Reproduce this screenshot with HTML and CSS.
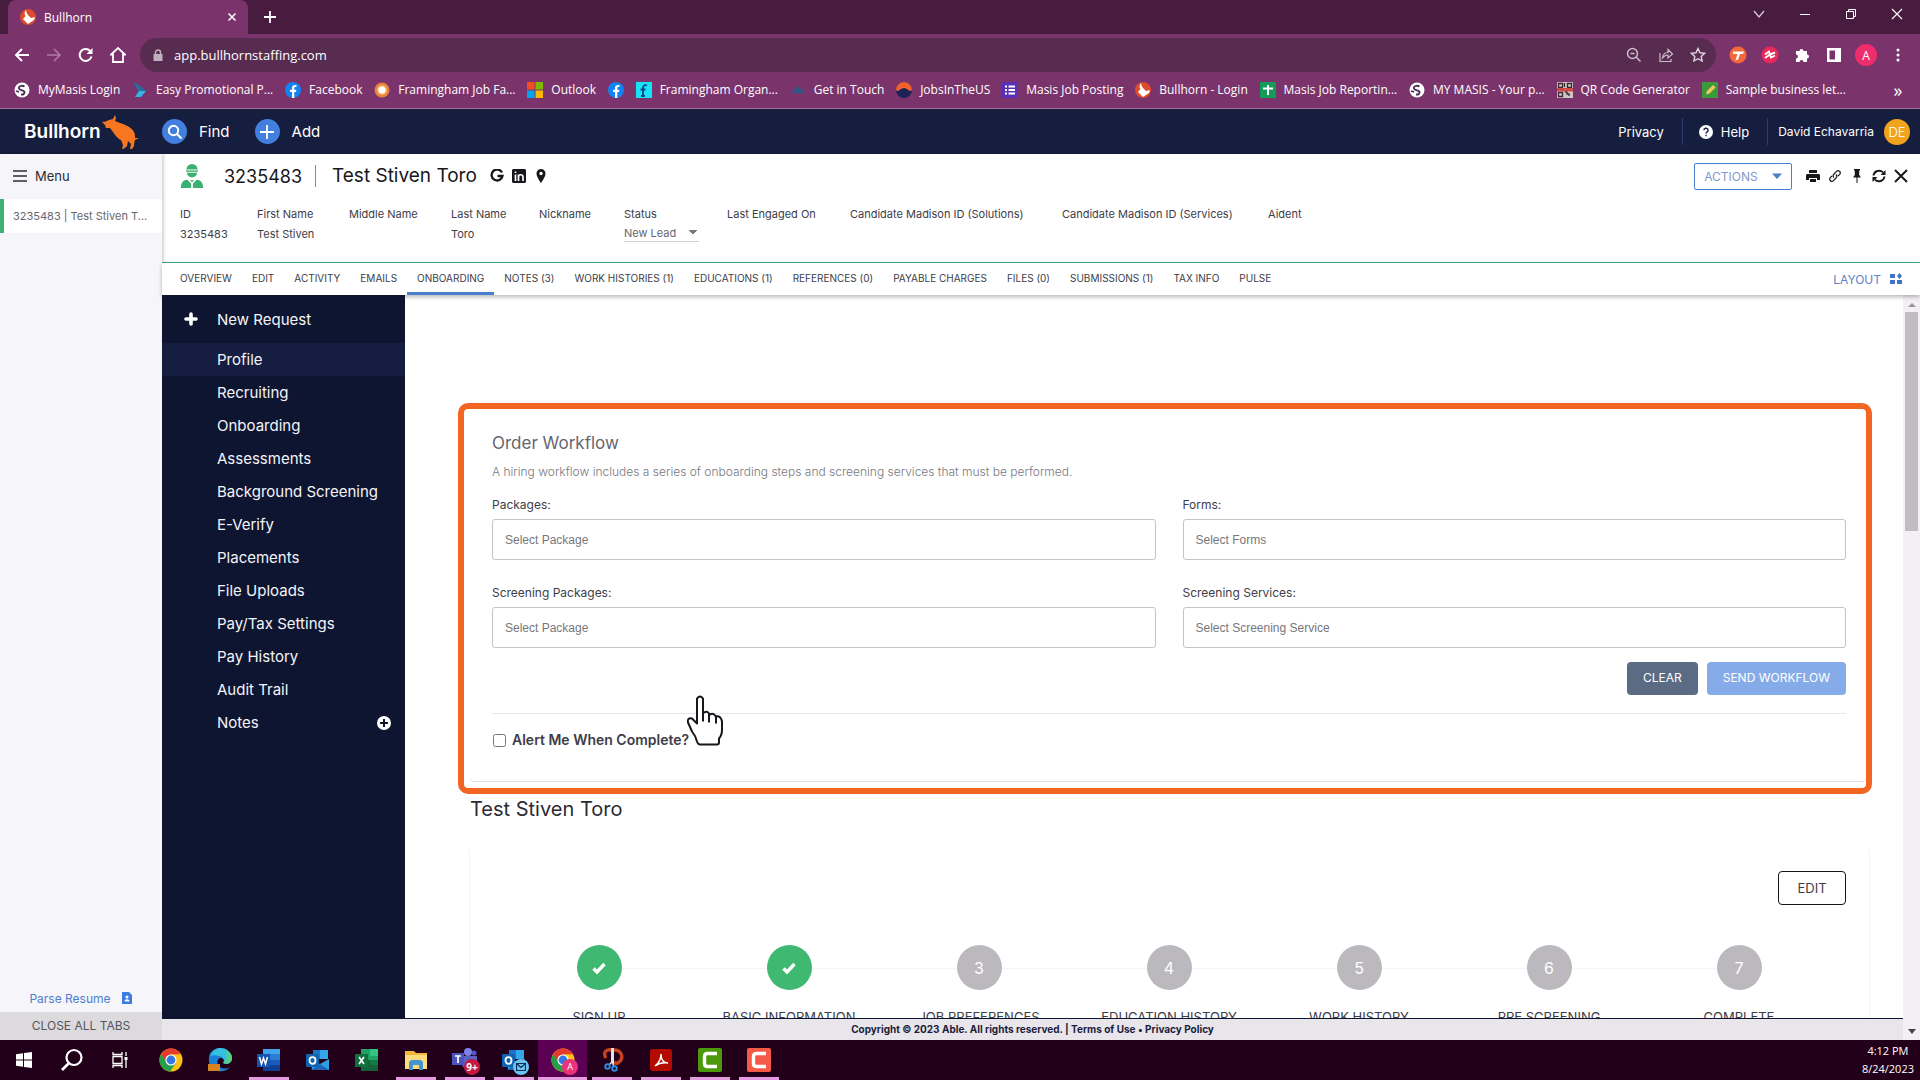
FILE: index.html
```html
<!DOCTYPE html>
<html lang="en">
<head>
<meta charset="utf-8">
<title>Bullhorn</title>
<link rel="stylesheet" href="styles.css">
</head>
<body>
<svg class="sprite" aria-hidden="true">
  <symbol id="bull-mark" viewBox="0 0 16 16"><circle cx="8" cy="8" r="8" fill="#dd4a2c"/><path d="M6 1c-1.500 2-2 4-.5 6L3 10l5 5 6-4 1-3-4 1-3-3c-1-1-1.500-3-2-5z" fill="#fff"/></symbol>
  <symbol id="globe" viewBox="0 0 16 16"><circle cx="8" cy="8" r="7.500" fill="#fff"/><path d="M10.500 4.500C8 3 4.500 4 5 6.500S11 8 10.500 10.500 7 12.500 7 12.500M2 9l3 1" fill="none" stroke="#4b2a55" stroke-width="1.800"/></symbol>
  <symbol id="fb" viewBox="0 0 16 16"><circle cx="8" cy="8" r="8" fill="#1183f5"/><path d="M7 16V10H5V7.700h2V6c0-2 1.200-3 3-3l1.500.1v2h-1c-.8 0-1.200.4-1.200 1.100v1.500h2.100L11 10H9.300v6z" fill="#fff"/></symbol>
  <symbol id="chrome" viewBox="0 0 24 24"><circle cx="12" cy="12" r="11.500" fill="#fbc116"/><path d="M2 6.300A11.500 11.500 0 0 1 22 6.300H12L7 15z" fill="#e33b2e"/><path d="M2 6.300A11.500 11.500 0 0 0 11 23.500l6-8.800H8z" fill="#269f4b"/><circle cx="12" cy="12" r="5.600" fill="#fff"/><circle cx="12" cy="12" r="4.400" fill="#3478e8"/></symbol>
  <symbol id="outlook" viewBox="0 0 24 24"><path d="M7 2h15v9H7z" fill="#1a76c8"/><path d="M14 2h8v9h-8z" fill="#34a7ec"/><path d="M5 12l9 4 9-5v11H6z" fill="#2f9de4"/><path d="M5 22l9-6 9 6z" fill="#1b66b4"/><rect x="0" y="6" width="13" height="13" rx="1" fill="#0f63b0"/><ellipse cx="6.500" cy="12.500" rx="3" ry="3.300" fill="none" stroke="#fff" stroke-width="1.800"/></symbol>
</svg>

<header class="browser">
  <div class="tabstrip">
    <div class="tab">
      <svg class="i16"><use href="#bull-mark"/></svg><span class="tab-title">Bullhorn</span>
      <button class="plain" aria-label="Close tab"><svg class="i10" viewBox="0 0 10 10"><path d="M1.500 1.500l7 7m0-7l-7 7" stroke="#fff" stroke-width="1.500"/></svg></button>
    </div>
    <button class="plain newtab" aria-label="New tab"><svg class="i14" viewBox="0 0 14 14"><path d="M7 1v12M1 7h12" stroke="#fff" stroke-width="1.800"/></svg></button>
    <div class="winctl">
      <button class="plain" aria-label="Search tabs"><svg class="i14" viewBox="0 0 14 14"><path d="M2 4l5 6 5-6" fill="none" stroke="#d9c9d5" stroke-width="1.300"/></svg></button>
      <button class="plain" aria-label="Minimize"><svg class="i14" viewBox="0 0 14 14"><path d="M2 7.500h10" stroke="#fff"/></svg></button>
      <button class="plain" aria-label="Restore"><svg class="i14" viewBox="0 0 14 14"><path d="M2.500 4.500h7v7h-7zM4.500 4.500v-2h7v7h-2" fill="none" stroke="#fff"/></svg></button>
      <button class="plain" aria-label="Close"><svg class="i14" viewBox="0 0 14 14"><path d="M2 2l10 10m0-10L2 12" stroke="#fff" stroke-width="1.100"/></svg></button>
    </div>
  </div>
  <div class="toolbar">
    <div class="cells">
      <button class="plain" aria-label="Back"><svg class="i16" viewBox="0 0 16 16"><path d="M15 8H2m6-6L2 8l6 6" fill="none" stroke="#fff" stroke-width="1.900"/></svg></button>
      <button class="plain" aria-label="Forward"><svg class="i16" viewBox="0 0 16 16"><path d="M1 8h13M8 2l6 6-6 6" fill="none" stroke="#ad78a2" stroke-width="1.700"/></svg></button>
      <button class="plain" aria-label="Reload"><svg class="i16" viewBox="0 0 16 16"><path d="M13.500 9.500A6 6 0 1 1 12 3.700" fill="none" stroke="#fff" stroke-width="2"/><path d="M14.500 1v6h-6z" fill="#fff"/></svg></button>
      <button class="plain" aria-label="Home"><svg class="i16" viewBox="0 0 16 16"><path d="M3 15V7.500H1L8 1l7 6.500h-2V15z" fill="none" stroke="#fff" stroke-width="1.800"/></svg></button>
    </div>
    <div class="omnibox">
      <svg class="i12" viewBox="0 0 12 12"><path d="M3.500 6V3.500a2.500 2.500 0 0 1 5 0V6" fill="none" stroke="#bfb0bf" stroke-width="1.500"/><rect x="1.500" y="5" width="9" height="7" fill="#bfb0bf"/></svg>
      <input class="url" aria-label="Address" value="app.bullhornstaffing.com">
      <div class="cells">
        <button class="plain" aria-label="Zoom"><svg class="i16" viewBox="0 0 16 16"><path d="M6.500 1.500a5 5 0 1 0 0 10 5 5 0 0 0 0-10zM10 10l4.500 4.500M4.500 6.500h4" fill="none" stroke="#cbbcca" stroke-width="1.500"/></svg></button>
        <button class="plain" aria-label="Share"><svg class="i16" viewBox="0 0 16 16"><path d="M2 6v8.500h11V12M4.500 11c.5-4 3-5.500 5.500-5.500V2.500l4.500 4.500-4.500 4V8c-2.500 0-4 1-5.500 3z" fill="none" stroke="#cbbcca" stroke-width="1.200"/></svg></button>
        <button class="plain" aria-label="Bookmark"><svg class="i16" viewBox="0 0 16 16"><path d="M8 1.500l2 4.300 4.600.5-3.400 3.100.9 4.600L8 11.700 3.900 14l.9-4.600L1.400 6.300 6 5.800z" fill="none" stroke="#e0d5df" stroke-width="1.400"/></svg></button>
      </div>
    </div>
    <div class="cells">
      <button class="plain" aria-label="Extension T"><svg class="i18" viewBox="0 0 18 18"><circle cx="9" cy="9" r="8.500" fill="#f4683c"/><path d="M4 5.500h11l-1 2.500h-3l-2 6H6.500l2-6H4z" fill="#fff"/></svg></button>
      <button class="plain" aria-label="Extension S"><svg class="i18" viewBox="0 0 18 18"><circle cx="9" cy="9" r="8.500" fill="#e8295a"/><path d="M4 8.500l4-3 1 3 5-2M4 12l5-3.500 1 3 4-2" fill="none" stroke="#fff" stroke-width="1.900"/></svg></button>
      <button class="plain" aria-label="Extensions"><svg class="i16" viewBox="0 0 16 16"><path d="M2 4h3.500a2 2 0 1 1 4 0H13v3.500a2 2 0 1 1 0 4V15H9.500a2 2 0 0 0-4 0H2v-3.500a2 2 0 0 0 0-4z" fill="#fff"/></svg></button>
      <button class="plain" aria-label="Side panel"><svg class="i16" viewBox="0 0 16 16"><path d="M1 1h14v14H1zM3.500 3.500v9H9v-9z" fill="#fff" fill-rule="evenodd"/></svg></button>
      <button class="plain profile" aria-label="Profile">A</button>
      <button class="plain" aria-label="More"><svg class="i16" viewBox="0 0 16 16"><circle cx="8" cy="3" r="1.500" fill="#fff"/><circle cx="8" cy="8" r="1.500" fill="#fff"/><circle cx="8" cy="13" r="1.500" fill="#fff"/></svg></button>
    </div>
  </div>
  <nav class="bookmarks" aria-label="Bookmarks">
    <div class="bookmark-list">
      <a href="#"><svg class="i16"><use href="#globe"/></svg>MyMasis Login</a>
      <a href="#"><svg class="i16" viewBox="0 0 16 16"><path d="M1 0c3 2 9 5 13 9L9 8z" fill="#1d4f7c"/><path d="M1 0l6 3 7 6-7 2z" fill="#2a6d9c"/><path d="M14 9l-5 6H3l4-6z" fill="#35b4e2"/></svg>Easy Promotional P...</a>
      <a href="#"><svg class="i16"><use href="#fb"/></svg>Facebook</a>
      <a href="#"><svg class="i16" viewBox="0 0 16 16"><circle cx="8" cy="8" r="7.500" fill="#e5843a"/><circle cx="8" cy="8" r="5" fill="#f7b267"/><circle cx="8" cy="8" r="3.600" fill="#fff"/></svg>Framingham Job Fa...</a>
      <a href="#"><svg class="i16" viewBox="0 0 16 16"><path d="M0 0h7.500v7.500H0z" fill="#f25022"/><path d="M8.500 0H16v7.500H8.500z" fill="#7fba00"/><path d="M0 8.500h7.500V16H0z" fill="#00a4ef"/><path d="M8.500 8.500H16V16H8.500z" fill="#ffb900"/></svg>Outlook</a>
      <a href="#" aria-label="Facebook page"><svg class="i16"><use href="#fb"/></svg></a>
      <a href="#"><svg class="i16" viewBox="0 0 16 16"><path d="M0 0h16v16H0z" fill="#14e4f4"/><path d="M11 3.500c-3-1-4 .5-4 3V14M4.500 7.500h5M5 14h4" fill="none" stroke="#1d3c8c" stroke-width="1.800"/></svg>Framingham Organ...</a>
      <a href="#"><svg class="i16" viewBox="0 0 16 16"><path d="M1 11l7-7 7 7z" fill="#2c5a84"/></svg>Get in Touch</a>
      <a href="#"><svg class="i16" viewBox="0 0 16 16"><circle cx="8" cy="8" r="8" fill="#1c2258"/><path d="M0 8a8 8 0 0 1 16 0c-3 3-4-2-8-2S3 11 0 8z" fill="#f0612e"/></svg>JobsInTheUS</a>
      <a href="#"><svg class="i16" viewBox="0 0 16 16"><path d="M0 0h16v16H0z" fill="#5a2fb8"/><path d="M3 4.500h2m1.500 0H13M3 8h2m1.500 0H13M3 11.500h2m1.500 0H13" stroke="#fff" stroke-width="1.800"/></svg>Masis Job Posting</a>
      <a href="#"><svg class="i16"><use href="#bull-mark"/></svg>Bullhorn - Login</a>
      <a href="#"><svg class="i16" viewBox="0 0 16 16"><path d="M0 0h16v16H0z" fill="#159b58"/><path d="M8 3v10M3 6.500h10" stroke="#fff" stroke-width="2"/></svg>Masis Job Reportin...</a>
      <a href="#"><svg class="i16"><use href="#globe"/></svg>MY MASIS - Your p...</a>
      <a href="#"><svg class="i16" viewBox="0 0 16 16"><path d="M0 0h16v16H0z" fill="#cfc6c6"/><path d="M1.500 1.500h4v4h-4zM10.500 1.500h4v4h-4zM1.500 10.500h4v4h-4zM8 10h2v2h2v2M7.500 1v4" fill="none" stroke="#3a2630" stroke-width="1.300"/><path d="M0 6h16v3.500H0z" fill="#d04a45"/></svg>QR Code Generator</a>
      <a href="#"><svg class="i16" viewBox="0 0 16 16"><path d="M0 0h16v16H0z" fill="#3b9a3c"/><path d="M4 12.500l1-3.500 6-6 2.500 2.500-6 6z" fill="#f3c95d"/></svg>Sample business let...</a>
    </div>
    <button class="plain more" aria-label="More bookmarks">»</button>
  </nav>
</header>

<div class="appbar">
  <a class="logo" href="#">Bullhorn<svg class="bull" viewBox="0 0 38 34"><path d="M1 7q4 0 7-2l4-1 2-4 1 3-1 3 5 2c7 2 12 5 14 9 1 2 1 4 1 6l4 0-4 2q-1 3-1 6l-2 3h-2l1-5-3-3-1 5-2 2h-1l0 2h-2l1-5-2-5c-3-1-6-5-8-8l-3-4-4 0-1-3z" fill="#f7761f"/></svg></a>
  <button class="plain action"><span class="disc"><svg class="i16" viewBox="0 0 16 16"><path d="M6.500 1.800a4.700 4.700 0 1 0 0 9.400 4.700 4.700 0 0 0 0-9.400zM10 10l4.500 4.500" fill="none" stroke="#fff" stroke-width="2"/></svg></span>Find</button>
  <button class="plain action"><span class="disc"><svg class="i16" viewBox="0 0 16 16"><path d="M8 1v14M1 8h14" stroke="#fff" stroke-width="1.800"/></svg></span>Add</button>
  <div class="account">
    <a class="cell privacy" href="#">Privacy</a>
    <a class="cell help" href="#"><svg class="i14" viewBox="0 0 14 14"><circle cx="7" cy="7" r="7" fill="#fff"/><path d="M4.900 5.300a2.100 2 0 1 1 3.200 1.600c-.8.500-1.100.8-1.100 1.700M7 9.700v1.600" fill="none" stroke="#161e3f" stroke-width="1.400"/></svg>Help</a>
    <a class="cell user" href="#">David Echavarria<span class="avatar">DE</span></a>
  </div>
</div>

<div class="workspace">
  <aside class="side">
    <button class="plain menu"><svg class="i14" viewBox="0 0 14 14"><path d="M0 2h14M0 7h14M0 12h14" stroke="#2b2b33" stroke-width="1.500"/></svg>Menu</button>
    <a class="open-record" href="#">3235483 | Test Stiven T...</a>
    <a class="parse" href="#">Parse Resume<svg class="i12" viewBox="0 0 12 12"><path d="M1 0h7l3 3v9H1z" fill="#3c7be0"/><circle cx="6" cy="5" r="1.500" fill="#fff"/><path d="M3.500 9.500c0-3 5-3 5 0z" fill="#fff"/></svg></a>
    <button class="plain close-all">CLOSE ALL TABS</button>
  </aside>

  <main class="record">
    <section class="record-head">
      <div class="title-row">
        <svg class="person" viewBox="0 0 24 28"><path d="M6 7a6 6 0 0 1 12 0z" fill="#3bb273"/><path d="M5.500 8h13v1.500h-13z" fill="#3bb273"/><path d="M6.500 10.500h11a5.500 5 0 0 1-11 0z" fill="#3bb273"/><path d="M0 27c0-6 3-9 7-9l4 4v5zM24 27c0-6-3-9-7-9l-4 4v5z" fill="#3bb273"/><path d="M10 18.500h4L12 21z" fill="#3bb273"/></svg>
        <span class="rec-id">3235483</span>
        <h1 class="rec-name">Test Stiven Toro</h1>
        <a class="ext" href="#" aria-label="Google"><svg class="i14" viewBox="0 0 14 14"><path d="M12 3.500A5.500 5.500 0 1 0 12.500 7H7.500" fill="none" stroke="#17171c" stroke-width="2.300"/></svg></a>
        <a class="ext" href="#" aria-label="LinkedIn"><svg class="i14" viewBox="0 0 14 14"><path d="M1 0h12l1 1v12l-1 1H1l-1-1V1z" fill="#17171c"/><path d="M3.500 5.500V12M3.500 2.500V4M6.500 12V5.500M6.500 8c0-3 4.500-3 4.500 0v4" fill="none" stroke="#fff" stroke-width="1.700"/></svg></a>
        <a class="ext" href="#" aria-label="Map"><svg class="i14" viewBox="0 0 14 14"><path d="M7 0a4.500 4.500 0 0 0-4.500 4.500C2.500 8 7 14 7 14s4.500-6 4.500-9.500A4.500 4.500 0 0 0 7 0zm0 2.800a1.700 1.700 0 1 1 0 3.400 1.700 1.700 0 0 1 0-3.400z" fill="#17171c"/></svg></a>
        <div class="tools">
          <button class="actions">ACTIONS<svg class="i10" viewBox="0 0 10 10"><path d="M0 2.500h10L5 8z" fill="#4a7fd0"/></svg></button>
          <button class="plain" aria-label="Print"><svg class="i14" viewBox="0 0 14 14"><path d="M3 1h8v3H3zM1 5h12l1 1v5h-3V9H3v2H0V6zM4 10h6v3H4z" fill="#17171c"/></svg></button>
          <button class="plain" aria-label="Copy link"><svg class="i14" viewBox="0 0 14 14"><path d="M6 8.500c-1.500-1.500-1-2.500 0-3.500l2.500-2.700c2-2 5 .8 3.200 3L10 7M8 5.500c1.500 1.500 1 2.500 0 3.500l-2.500 2.700c-2 2-5-.8-3.200-3L4 7" fill="none" stroke="#17171c" stroke-width="1.200"/></svg></button>
          <button class="plain" aria-label="Pin"><svg class="i14" viewBox="0 0 14 14"><path d="M4 0h6v1.500H9.200V6l1.800 2.500H3L4.800 6V1.500H4zM6.500 8.500h1V14h-1z" fill="#17171c"/></svg></button>
          <button class="plain" aria-label="Refresh"><svg class="i14" viewBox="0 0 14 14"><path d="M1.500 6.500C2 2 8 0 11 3.500M12.500 7.500C12 12 6 14 3 10.500" fill="none" stroke="#17171c" stroke-width="1.900"/><path d="M13.500 1v5h-5zM.5 13V8h5z" fill="#17171c"/></svg></button>
          <button class="plain" aria-label="Close record"><svg class="i14" viewBox="0 0 14 14"><path d="M1 1l12 12M13 1L1 13" stroke="#17171c" stroke-width="1.900"/></svg></button>
        </div>
      </div>
      <dl class="facts">
        <div><dt>ID</dt><dd>3235483</dd></div>
        <div><dt>First Name</dt><dd>Test Stiven</dd></div>
        <div><dt>Middle Name</dt><dd></dd></div>
        <div><dt>Last Name</dt><dd>Toro</dd></div>
        <div><dt>Nickname</dt><dd></dd></div>
        <div><dt><label for="status">Status</label></dt><dd><select id="status" class="status"><option>New Lead</option></select></dd></div>
        <div><dt>Last Engaged On</dt><dd></dd></div>
        <div><dt>Candidate Madison ID (Solutions)</dt><dd></dd></div>
        <div><dt>Candidate Madison ID (Services)</dt><dd></dd></div>
        <div><dt>Aident</dt><dd></dd></div>
      </dl>
    </section>

    <nav class="rec-tabs" aria-label="Record">
      <a href="#">OVERVIEW</a><a href="#">EDIT</a><a href="#">ACTIVITY</a><a href="#">EMAILS</a><a href="#" class="current">ONBOARDING</a><a href="#">NOTES (3)</a><a href="#">WORK HISTORIES (1)</a><a href="#">EDUCATIONS (1)</a><a href="#">REFERENCES (0)</a><a href="#">PAYABLE CHARGES</a><a href="#">FILES (0)</a><a href="#">SUBMISSIONS (1)</a><a href="#">TAX INFO</a><a href="#">PULSE</a>
      <button class="plain layout">LAYOUT<svg class="i12" viewBox="0 0 12 12"><path d="M0 1h5v4H0zM0 7h5v4H0zM7 7h5v4H7zM9.500 0L12 3 9.500 6 7 3z" fill="#3f74c8"/></svg></button>
    </nav>

    <div class="frame">
      <div class="frame-main">
        <div class="frame-body">
          <nav class="onb-nav" aria-label="Onboarding">
            <a class="new-request" href="#"><svg class="i14" viewBox="0 0 14 14"><path d="M7 2v10M2 7h10" stroke="#fff" stroke-width="3.600" stroke-linecap="round"/></svg>New Request</a>
            <a class="item current" href="#">Profile</a>
            <a class="item" href="#">Recruiting</a>
            <a class="item" href="#">Onboarding</a>
            <a class="item" href="#">Assessments</a>
            <a class="item" href="#">Background Screening</a>
            <a class="item" href="#">E-Verify</a>
            <a class="item" href="#">Placements</a>
            <a class="item" href="#">File Uploads</a>
            <a class="item" href="#">Pay/Tax Settings</a>
            <a class="item" href="#">Pay History</a>
            <a class="item" href="#">Audit Trail</a>
            <a class="item" href="#">Notes<svg class="i14" viewBox="0 0 14 14"><circle cx="7" cy="7" r="7" fill="#fff"/><path d="M7 3v8M3 7h8" stroke="#0e1531" stroke-width="2"/></svg></a>
          </nav>
          <div class="content">
            <section class="highlight">
              <form class="workflow">
                <h2>Order Workflow</h2>
                <p class="hint">A hiring workflow includes a series of onboarding steps and screening services that must be performed.</p>
                <div class="fields">
                  <div class="field"><label for="pkg">Packages:</label><input id="pkg" placeholder="Select Package"></div>
                  <div class="field"><label for="forms">Forms:</label><input id="forms" placeholder="Select Forms"></div>
                  <div class="field"><label for="spkg">Screening Packages:</label><input id="spkg" placeholder="Select Package"></div>
                  <div class="field"><label for="ssvc">Screening Services:</label><input id="ssvc" placeholder="Select Screening Service"></div>
                </div>
                <div class="buttons"><button type="button" class="btn clear">CLEAR</button><button type="button" class="btn send">SEND WORKFLOW</button></div>
                <div class="alert"><input type="checkbox" id="alert"><label for="alert">Alert Me When Complete?</label></div>
              </form>
            </section>
            <h2 class="person-name">Test Stiven Toro</h2>
            <section class="progress">
              <button class="btn edit">EDIT</button>
              <ol class="steps">
                <li><span class="dot done"><svg class="i16" viewBox="0 0 16 16"><path d="M2.500 8.500l3.500 3.500 7.500-8" fill="none" stroke="#fff" stroke-width="3.400"/></svg></span>SIGN UP</li>
                <li><span class="dot done"><svg class="i16" viewBox="0 0 16 16"><path d="M2.500 8.500l3.500 3.500 7.500-8" fill="none" stroke="#fff" stroke-width="3.400"/></svg></span>BASIC INFORMATION</li>
                <li><span class="dot">3</span>JOB PREFERENCES</li>
                <li><span class="dot">4</span>EDUCATION HISTORY</li>
                <li><span class="dot">5</span>WORK HISTORY</li>
                <li><span class="dot">6</span>PRE SCREENING</li>
                <li><span class="dot">7</span>COMPLETE</li>
              </ol>
            </section>
          </div>
        </div>
        <footer class="legal">Copyright © 2023 Able. All rights reserved. |&nbsp;<a href="#">Terms of Use</a>&nbsp;•&nbsp;<a href="#">Privacy Policy</a></footer>
      </div>
      <div class="scrollbar">
        <svg class="i10" viewBox="0 0 10 10"><path d="M1 7h8L5 3z" fill="#9a979c"/></svg>
        <div class="thumb"></div>
        <svg class="i10" viewBox="0 0 10 10"><path d="M1 3h8L5 8z" fill="#45434a"/></svg>
      </div>
    </div>
  </main>
</div>

<footer class="taskbar">
  <button class="plain sys" aria-label="Start"><svg class="i16" viewBox="0 0 16 16"><path d="M0 2.200l7-1v6.300H0zM8 1l8-1v7.500H8zM0 8.500h7v6.300l-7-1zM8 8.500h8V16l-8-1z" fill="#fff"/></svg></button>
  <button class="plain sys" aria-label="Search"><svg class="i24" viewBox="0 0 24 24"><circle cx="14" cy="9.500" r="7.500" fill="none" stroke="#fff" stroke-width="2.200"/><path d="M8.500 15.500L2 22" stroke="#fff" stroke-width="2.600"/></svg></button>
  <button class="plain sys" aria-label="Task view"><svg class="i18" viewBox="0 0 18 18"><path d="M2 1v2.500h9V1M2 17v-2.500h9V17M2 5.500h9v7H2zM15 1v4m0 4v8" fill="none" stroke="#fff" stroke-width="1.300"/><path d="M13.500 6h3v3h-3z" fill="#fff"/></svg></button>
  <div class="apps">
    <button class="plain" aria-label="Chrome"><svg class="i24"><use href="#chrome"/></svg></button>
    <button class="plain" aria-label="Edge"><svg class="i24" viewBox="0 0 24 24"><path d="M1 13C0 5 5 0 12 0s12 5 12 10c0 5-5 7-9 5 2-2 1-5-2-5-4 0-5 6-1 9 3 2 7 2 10 0-3 4-8 5-12 4C4 22 1 18 1 13z" fill="#1b7fd4"/><path d="M2 8C5 2 9 0 12 0c7 0 12 5 12 10 0 5-5 7-9 5 2-2 1-6-4-7-4-1-7-1-9 0z" fill="#35c0e0"/><path d="M17 2c5 2 7 5 7 8 0 5-5 7-9 5 5-2 5-8 2-13z" fill="#58cf7c"/><path d="M0 16h12v7H0z" fill="#d9811e"/></svg></button>
    <button class="plain running" aria-label="Word"><svg class="i24" viewBox="0 0 24 24"><path d="M6 1h17v6H6z" fill="#41a5ee"/><path d="M6 6h17v6H6z" fill="#2b7cd3"/><path d="M6 12h17v5H6z" fill="#185abd"/><path d="M6 17h17v6H6z" fill="#103f91"/><path d="M0 6h13v13H0z" fill="#1553b0"/><path d="M2.500 9l2 7 2-6 2 6 2-7" fill="none" stroke="#fff" stroke-width="1.500"/></svg></button>
    <button class="plain" aria-label="Outlook"><svg class="i24"><use href="#outlook"/></svg></button>
    <button class="plain" aria-label="Excel"><svg class="i24" viewBox="0 0 24 24"><path d="M6 1h17v22H6z" fill="#21a366"/><path d="M15 1h8v7h-8z" fill="#33c481"/><path d="M6 12h17v11H6z" fill="#14633a"/><path d="M15 12h8v5h-8z" fill="#107c41"/><path d="M0 6h13v13H0z" fill="#10703b"/><path d="M4 9l5 7M9 9l-5 7" stroke="#fff" stroke-width="1.700"/></svg></button>
    <button class="plain running" aria-label="File Explorer"><svg class="i24" viewBox="0 0 24 24"><path d="M1 3h9l2 2h11v16H1z" fill="#f3b73d"/><path d="M1 7h22v14H1z" fill="#fcdc7c"/><path d="M5 22v-8l2-2h10l2 2v8h-4v-5H9v5z" fill="#4393cf"/></svg></button>
    <button class="plain running" aria-label="Teams, 9+ notifications"><svg class="i28" viewBox="0 0 28 28"><circle cx="17" cy="6" r="4" fill="#7b83eb"/><circle cx="23" cy="7" r="2.500" fill="#5059c9"/><path d="M10 10h16v9l-4 4h-8l-4-5z" fill="#5a62c3"/><path d="M1 7h12v12H1z" fill="#4b53bc"/><path d="M4 10h6M7 10v7" stroke="#fff" stroke-width="1.700"/></svg><span class="badge count">9+</span></button>
    <button class="plain running" aria-label="Outlook mail"><svg class="i24"><use href="#outlook"/></svg><span class="badge mail"><svg class="i10" viewBox="0 0 10 10"><path d="M.5 1.500h9v7h-9zl4.500 4 4.500-4" fill="none" stroke="#102a50" stroke-width="1.200"/></svg></span></button>
    <button class="plain running active" aria-label="Chrome, profile A"><svg class="i24"><use href="#chrome"/></svg><span class="badge prof">A</span></button>
    <button class="plain running" aria-label="Snipping Tool"><svg class="i24" viewBox="0 0 24 24"><path d="M6 10C2 3 8 1 12 2M14 2c8 0 10 8 5 12-2 2-4 1-5 0" fill="none" stroke="#c5431f" stroke-width="3.400"/><path d="M11 0h3v16l-3-2z" fill="#dfe3ea"/><path d="M13 13l-4 4M12 13l2 6" stroke="#dfe3ea" stroke-width="1.500"/><circle cx="7.500" cy="18.500" r="2.300" fill="none" stroke="#2e8adf" stroke-width="1.900"/><circle cx="14.500" cy="20.500" r="2.300" fill="none" stroke="#2e8adf" stroke-width="1.900"/></svg></button>
    <button class="plain running" aria-label="Acrobat"><svg class="i24" viewBox="0 0 24 24"><rect x="1" y="1" width="22" height="22" rx="3" fill="#b30b00"/><path d="M6 18c4-3 6-7 6-12 0 6 3 9 7 9-5-1-9 0-13 3z" fill="none" stroke="#fff" stroke-width="1.500"/></svg></button>
    <button class="plain running" aria-label="Camtasia"><svg class="i24" viewBox="0 0 24 24"><rect width="24" height="24" rx="2" fill="#4c9a0c"/><path d="M19 5.500H9.500q-3 0-3 3v7q0 3 3 3H19" fill="none" stroke="#fff" stroke-width="3.400"/></svg></button>
    <button class="plain running" aria-label="Camtasia Recorder"><svg class="i24" viewBox="0 0 24 24"><rect width="24" height="24" rx="2" fill="#f55a48"/><path d="M19 5.500H9.500q-3 0-3 3v7q0 3 3 3H19" fill="none" stroke="#fff" stroke-width="3.400"/></svg></button>
  </div>
  <div class="clock"><span>4:12 PM</span><span>8/24/2023</span></div>
</footer>

<svg class="pointer" viewBox="0 0 40 50"><path d="M11 3q3-4 6 0v15l1-1q3-2 5 1l1 1q3-2 5 1l1 1q5-1 6 5v8q0 6-3 9v4q0 2-2 2H14q-2 0-3-3-1-5-5-10L2 27q-1-5 4-4l5 5z" fill="#fff" stroke="#17171c" stroke-width="2" stroke-linejoin="round"/><path d="M17 17v9M23 18v9M30 20v8" stroke="#17171c" stroke-width="2"/></svg>
</body>
</html>
```

FILE: styles.css
```css
* { box-sizing: border-box; }
html { height: 100%; }
body {
  margin: 0;
  height: 100%;
  min-height: 640px;
  display: flex;
  flex-direction: column;
  overflow: hidden;
  font-family: Inter, "Open Sans", sans-serif;
  font-size: 11px;
  color: #3d3d48;
  background: #fff;
}
a { color: inherit; text-decoration: none; }
h1, h2, p, dl, dd, ol { margin: 0; padding: 0; font-weight: 400; }
svg { display: block; flex: none; }
.sprite { position: absolute; width: 0; height: 0; }
.i10 { width: 10px; height: 10px; }
.i12 { width: 12px; height: 12px; }
.i14 { width: 14px; height: 14px; }
.i16 { width: 16px; height: 16px; }
.i18 { width: 18px; height: 18px; }
.i24 { width: 24px; height: 24px; }
.i28 { width: 28px; height: 28px; }
.plain {
  display: flex;
  align-items: center;
  justify-content: center;
  padding: 0;
  border: 0;
  background: none;
  color: inherit;
  font: inherit;
}

/* Browser window */
.browser {
  flex: none;
  background: #7b346b;
  color: #fff;
  font-family: "Open Sans", "Noto Sans", sans-serif;
  font-size: 12px;
  border-bottom: 1px solid #a5719b;
}
.tabstrip { display: flex; height: 34px; padding-left: 8px; background: #481c3f; }
.tab {
  display: flex;
  align-items: center;
  gap: 8px;
  width: 240px;
  padding: 0 11px 0 12px;
  background: #7b346b;
  border-radius: 8px 8px 0 0;
}
.tab-title { flex: 1; }
.newtab { width: 44px; }
.winctl { display: flex; margin-left: auto; height: 28px; }
.winctl .plain { width: 46px; }
.toolbar { display: flex; align-items: center; height: 42px; padding: 0 6px; }
.cells { display: flex; }
.cells .plain { width: 32px; height: 32px; }
.omnibox {
  display: flex;
  align-items: center;
  flex: 1;
  height: 34px;
  margin: 0 6px;
  padding: 0 2px 0 12px;
  border-radius: 17px;
  background: #582b51;
}
.url {
  flex: 1;
  margin-left: 10px;
  padding: 0;
  border: 0;
  background: none;
  color: #fff;
  font: 13px "Open Sans", sans-serif;
}
.cells .profile {
  width: 22px;
  height: 22px;
  margin: 5px;
  border-radius: 50%;
  background: #ee2e6c;
}
.bookmarks { display: flex; align-items: center; height: 32px; padding-bottom: 5px; }
.bookmark-list {
  display: flex;
  flex: 1;
  justify-content: space-between;
  padding-left: 14px;
  margin-right: 30px;
}
.bookmark-list a { display: flex; align-items: center; gap: 8px; white-space: nowrap; }
.more { width: 44px; font-size: 18px; }

/* Application bar */
.appbar {
  display: flex;
  align-items: center;
  flex: none;
  height: 45px;
  padding: 0 10px 0 24px;
  background: #161e3f;
  color: #fff;
  font-size: 15px;
}
.logo { display: flex; align-items: center; width: 138px; line-height: 38px; font-size: 19px; font-weight: 600; }
.bull { width: 38px; height: 34px; }
.action { gap: 12px; margin-right: 25px; }
.disc {
  display: flex;
  align-items: center;
  justify-content: center;
  width: 25px;
  height: 25px;
  border-radius: 50%;
  background: #427fdf;
}
.account { display: flex; margin-left: auto; font-size: 13px; }
.cell { display: flex; align-items: center; height: 27px; padding: 0 18px; }
.cell + .cell { border-left: 1px solid #2d3c6e; }
.cell.help { gap: 8px; padding-left: 16px; }
.cell.user { gap: 10px; padding: 0 0 0 10px; font-size: 12px; }
.avatar {
  width: 26px;
  height: 26px;
  border-radius: 50%;
  background: #f0a31c;
  font-size: 13px;
  font-weight: 300;
  line-height: 26px;
  text-align: center;
}

/* Workspace and open-record sidebar */
.workspace { display: flex; flex: 1; min-height: 0; }
.side {
  display: flex;
  flex-direction: column;
  flex: none;
  width: 162px;
  background: #f6f5f9;
  box-shadow: 1px 0 4px rgba(0, 0, 0, .25);
}
.menu { justify-content: flex-start; gap: 8px; height: 45px; padding: 0 0 1px 13px; font-size: 13px; color: #2b2b33; }
.open-record {
  height: 34px;
  padding-left: 9px;
  border-left: 4px solid #3bb273;
  background: #fff;
  line-height: 34px;
  white-space: nowrap;
  color: #66666f;
}
.parse {
  display: flex;
  align-items: center;
  justify-content: center;
  gap: 10px;
  height: 28px;
  margin-top: auto;
  font-size: 12px;
  color: #4a7fd0;
}
.close-all { height: 28px; padding-bottom: 2px; background: #dcdadd; font-size: 12px; color: #55555d; }

/* Record header */
.record { display: flex; flex-direction: column; flex: 1; min-width: 0; }
.record-head {
  flex: none;
  height: 109px;
  padding: 5px 12px 0 18px;
  border-bottom: 1px solid #3da578;
}
.title-row { display: flex; align-items: center; height: 34px; color: #17171c; }
.person { width: 24px; height: 26px; }
.rec-id {
  width: 111px;
  padding-left: 20px;
  font-size: 18px;
}
.rec-name {
  margin-right: 10px;
  padding-left: 16px;
  border-left: 1px solid #8a8a92;
  font-size: 19px;
  line-height: 22px;
}
.ext { width: 22px; padding-left: 3px; }
.tools { display: flex; gap: 8px; margin-left: auto; align-items: center; }
.actions {
  display: flex;
  align-items: center;
  justify-content: center;
  gap: 14px;
  width: 98px;
  height: 27px;
  margin-right: 6px;
  border: 1px solid #4a7fd0;
  border-radius: 2px;
  background: #fff;
  color: #7f9bcb;
  font: 12px Inter, sans-serif;
}
.facts {
  display: grid;
  grid-template-columns: 77px 92px 102px 88px 85px 103px 123px 212px 206px auto;
  margin-top: 11px;
  line-height: 20px;
  white-space: nowrap;
}
.status {
  display: block;
  width: 75px;
  height: 18px;
  padding: 0;
  border: 0;
  border-bottom: 1px solid #cfcfd6;
  appearance: none;
  background: conic-gradient(from -40deg at 50% 100%, #77777f 80deg, transparent 0) right 2px center / 8px 5px no-repeat;
  color: #66666f;
  font: 11px Inter, sans-serif;
}

.rec-tabs {
  display: flex;
  position: relative;
  z-index: 1;
  flex: none;
  height: 32px;
  padding: 0 18px 0 8px;
  box-shadow: 0 2px 4px rgba(0, 0, 0, .28);
  background: #fff;
  font-size: 10px;
  line-height: 31px;
  white-space: nowrap;
}
.rec-tabs a { padding: 0 10px; }
.rec-tabs .current { border-bottom: 3px solid #4a7fd0; }
.layout { gap: 9px; margin-left: auto; font-size: 12px; color: #5f82c4; }

/* Onboarding frame */
.frame { display: flex; flex: 1; min-height: 0; }
.frame-main { display: flex; flex-direction: column; flex: 1; min-width: 0; }
.frame-body { display: flex; flex: 1; min-height: 0; overflow: hidden; border-bottom: 1px solid #0e1531; }
.onb-nav {
  position: relative;
  z-index: 2;
  flex: none;
  width: 243px;
  background: #0e1531;
  color: #f4f4f8;
  font-size: 15px;
}
.new-request { display: flex; align-items: center; gap: 19px; height: 48px; padding-left: 22px; }
.item {
  display: flex;
  align-items: center;
  justify-content: space-between;
  height: 33px;
  padding: 0 14px 0 55px;
}
.item.current { background: #151d40; }
.content { flex: 1; min-width: 0; padding: 108px 31px 0 53px; }
.highlight { padding: 0 0 6px 6px; border: 6px solid #f26522; border-radius: 10px; }
.workflow {
  height: 373px;
  padding: 22px 20px 0 22px;
  border-bottom: 1px solid #dedee3;
  border-radius: 0 0 4px 4px;
}
.workflow h2 { font-size: 17px; line-height: 24px; color: #66666f; }
.hint { margin-top: 5px; font-size: 12px; font-weight: 300; line-height: 24px; color: #77777f; }
.fields { display: grid; grid-template-columns: 1fr 1fr; gap: 25px 27px; margin-top: 13px; }
.field { display: flex; flex-direction: column; gap: 6px; font-size: 12px; line-height: 16px; }
.field input {
  height: 41px;
  padding: 0 12px;
  border: 1px solid #c4c3c9;
  border-radius: 3px;
  font: 12px "Liberation Sans", Arial, sans-serif;
}
.field input::placeholder { color: #77777c; }
.buttons { display: flex; justify-content: flex-end; gap: 9px; margin-top: 14px; padding-bottom: 18px; border-bottom: 1px solid #e6e6ea; }
.btn {
  height: 33px;
  padding: 0 16px 2px;
  border: 0;
  border-radius: 4px;
  color: #fff;
  font: 12px Inter, sans-serif;
}
.clear { background: #5b6b84; }
.send { background: #86abe9; }
.alert { display: flex; align-items: center; gap: 6px; margin-top: 17px; font-size: 14px; line-height: 18px; font-weight: 600; }
.alert input { width: 13px; height: 13px; margin: 0 0 0 1px; }
.person-name { padding-left: 12px; margin-top: 3px; font-size: 20px; line-height: 24px; color: #2b2b33; }
.progress {
  display: flex;
  flex-direction: column;
  margin: 29px 2px 0 11px;
  padding: 21px 23px 0 22px;
  border: 1px solid #f4f4f6;
  border-width: 0 1px;
}
.edit { align-self: flex-end; width: 68px; height: 34px; padding: 0; border: 1px solid #17171c; background: #fff; color: #3d3d48; font-size: 13px; }
.steps {
  display: grid;
  grid-template-columns: repeat(7, 1fr);
  margin: 40px 12px 0;
  list-style: none;
  font-size: 13px;
  line-height: 16px;
  text-align: center;
  background: linear-gradient(#f4f4f6, #f4f4f6) center 23px / 86% 1px no-repeat;
}
.dot {
  display: flex;
  align-items: center;
  justify-content: center;
  width: 45px;
  height: 45px;
  margin: 0 auto 19px;
  border-radius: 50%;
  background: #bbb9bd;
  color: #fff;
  font-size: 16px;
}
.done { background: #3fb872; }
.legal {
  display: flex;
  align-items: center;
  justify-content: center;
  flex: none;
  height: 21px;
  padding-bottom: 1px;
  background: #e8e6ea;
  color: #1c1c3c;
  font-size: 10px;
  font-weight: 700;
}
.scrollbar {
  display: flex;
  flex-direction: column;
  align-items: center;
  justify-content: space-between;
  flex: none;
  width: 17px;
  padding: 5px 0 4px;
  background: #f2f0f4;
}
.thumb { width: 13px; height: 219px; margin: 2px 0 auto; background: #c0bdc2; }

/* Taskbar */
.taskbar { display: flex; flex: none; height: 40px; background: #230019; color: #fff; font-family: "Open Sans", sans-serif; }
.sys { width: 48px; }
.apps { display: flex; margin-left: 2px; }
.apps .plain { position: relative; width: 49px; }
.apps .running { background: linear-gradient(#e59be0, #e59be0) center bottom / 40px 3px no-repeat; }
.apps .active { background: linear-gradient(#e59be0, #e59be0) center bottom / 49px 3px no-repeat, #5c0054; }
.badge {
  position: absolute;
  right: 9px;
  bottom: 5px;
  display: flex;
  align-items: center;
  justify-content: center;
  width: 16px;
  height: 16px;
  border-radius: 50%;
  font-size: 10px;
  line-height: 16px;
}
.count { background: #c4183e; font-weight: 700; }
.mail { background: #6cc4f5; }
.prof { background: #e8337a; font-size: 9px; }
.clock {
  display: flex;
  flex-direction: column;
  align-items: center;
  justify-content: center;
  margin-left: auto;
  padding-right: 6px;
  font-size: 11px;
  line-height: 18px;
}

/* Hand pointer over the page */
.pointer { position: absolute; left: 686px; top: 695px; width: 40px; height: 51px; }
```
